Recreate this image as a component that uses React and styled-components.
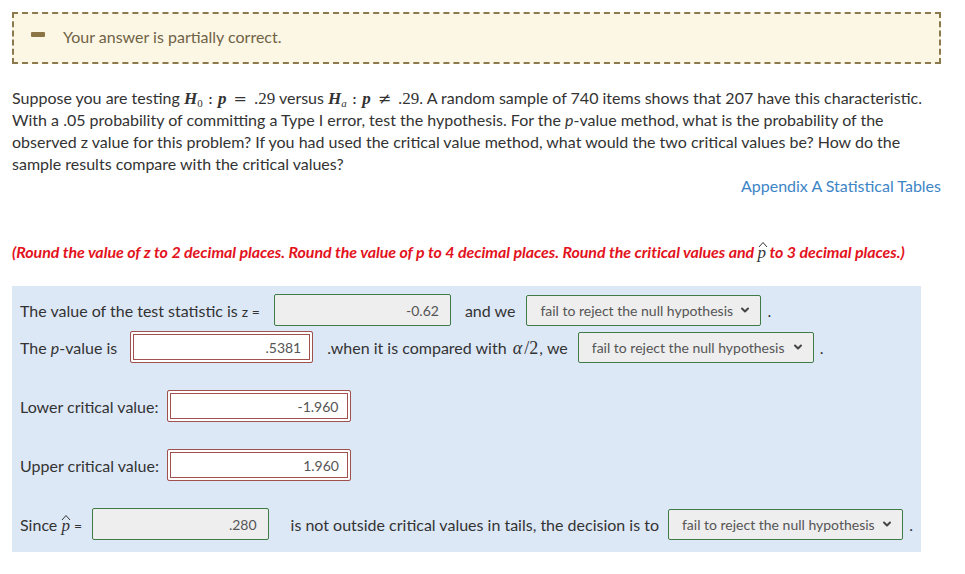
import React from 'react';
import styled, { createGlobalStyle } from 'styled-components';

const GlobalStyle = createGlobalStyle`
  body {
    margin: 0;
    background: #ffffff;
    font-family: Lato, "Open Sans", "Liberation Sans", sans-serif;
    color: #333333;
  }
`;

const Page = styled.div`
  width: 929px;
  padding: 12px 0 0 12px;
`;

const Feedback = styled.div`
  height: 52px;
  box-sizing: border-box;
  border: 2px dashed #8c7a4e;
  background: #fcf6e4;
  display: flex;
  align-items: center;
  padding: 0 0 4px 17px;
  gap: 18px;
  font-size: 16px;
  color: #6f6346;
`;

const Minus = styled.span`
  width: 14px;
  height: 5px;
  border-radius: 1px;
  background: #8c7444;
  margin-top: -4px;
`;

const Question = styled.p`
  margin: 23px 0 0;
  font-size: 16px;
  line-height: 22px;
  color: #333333;
  width: 925px;
`;

const Math = styled.span`
  font-family: "Liberation Serif", "DejaVu Serif", serif;
  font-size: 17px;
  line-height: 1;
  font-style: ${(p) => (p.$italic ? 'italic' : 'normal')};
  font-weight: ${(p) => (p.$bold ? 'bold' : 'normal')};
`;

const Rel = styled.span`
  font-family: "DejaVu Serif", "Liberation Serif", serif;
  font-size: 16px;
  line-height: 1;
  margin: 0 ${(p) => p.$pad || 6}px;
`;

const Sub = styled.sub`
  font-family: "Liberation Serif", "DejaVu Serif", serif;
  font-size: 11px;
  line-height: 0;
  vertical-align: -3px;
  font-style: ${(p) => (p.$italic ? 'italic' : 'normal')};
`;

const Fraction = styled.span`
  font-family: "Liberation Serif", "DejaVu Serif", serif;
  font-size: 18px;
  line-height: 1;
  margin: 0 1px 0 2px;
  i {
    margin-right: 2px;
  }
`;

const LinkRow = styled.div`
  text-align: right;
  font-size: 16px;
  line-height: 22px;
  color: #3d85c6;
`;

const Instruction = styled.p`
  margin: 44px 0 0;
  font-size: 16px;
  line-height: 22px;
  font-style: italic;
  font-weight: bold;
  letter-spacing: -0.06px;
  color: #e3131d;
`;

const Panel = styled.div`
  margin-top: 23px;
  width: 909px;
  box-sizing: border-box;
  background: #dde8f7;
  padding: 8px 8px 12px;
`;

const Row = styled.div`
  display: flex;
  align-items: center;
  margin-top: ${(p) => p.$top || 0}px;
  font-size: 16px;
  color: #333333;
  white-space: nowrap;
`;

const Label = styled.span`
  margin-left: ${(p) => p.$before || 0}px;
  margin-right: ${(p) => p.$space || 14}px;
`;

const Small = styled.span`
  font-size: 14px;
`;

const Field = styled.div`
  box-sizing: border-box;
  width: ${(p) => p.$w}px;
  height: 32px;
  display: flex;
  align-items: center;
  justify-content: flex-end;
  padding-right: 11px;
  font-size: 14px;
  color: #555555;
  border-radius: 2px;
  ${(p) =>
    p.$wrong
      ? `
    background: #ffffff;
    border: 1px solid #a0504d;
    box-shadow: inset 0 0 0 2px #ffffff, inset 0 0 0 3px #a0504d;
  `
      : `
    background: #eeeeee;
    border: 1px solid #3f7b46;
  `}
`;

const Select = styled.div`
  box-sizing: border-box;
  width: ${(p) => p.$w}px;
  height: 31px;
  display: flex;
  align-items: center;
  justify-content: space-between;
  padding: 0 10px 0 13px;
  background: #eeeeee;
  border: 1px solid #3f7b46;
  border-radius: 2px;
  font-size: 14px;
  color: #555555;
`;

const Dot = styled.span`
  margin-left: 6px;
`;

const Hat = styled.span`
  position: relative;
  display: inline-block;
  line-height: 1;
  color: #333333;
  font-weight: normal;
  svg {
    position: absolute;
    left: 0;
    top: -3px;
  }
`;

const Chevron = () => (
  <svg width="10" height="10" viewBox="0 0 10 10">
    <path d="M2 3.5 L5 6.5 L8 3.5" fill="none" stroke="#444" strokeWidth="2" strokeLinecap="round" strokeLinejoin="round" />
  </svg>
);

const PHat = () => (
  <Hat>
    <svg width="10" height="7" viewBox="0 0 10 7">
      <path d="M1 6 L5 1.5 L9 6" fill="none" stroke="#333" strokeWidth="1" />
    </svg>
    <Math $italic>p</Math>
  </Hat>
);

const decision = 'fail to reject the null hypothesis';

export default function App() {
  return (
    <>
      <GlobalStyle />
      <Page>
        <Feedback>
          <Minus />
          <span>Your answer is partially correct.</span>
        </Feedback>

        <Question>
          Suppose you are testing{' '}
          <Math $italic $bold>H</Math>
          <Sub>0</Sub>
          <Rel $pad={5}>:</Rel>
          <Math $italic $bold>p</Math>
          <Rel $pad={7}>=</Rel>
          <Math>.29</Math> versus{' '}
          <Math $italic $bold>H</Math>
          <Sub $italic>a</Sub>
          <Rel $pad={5}>:</Rel>
          <Math $italic $bold>p</Math>
          <Rel $pad={7}>≠</Rel>
          <Math>.29</Math>. A random sample of 740 items shows that 207 have this characteristic. With a .05
          probability of committing a Type I error, test the hypothesis. For the <i>p</i>-value method, what is the
          probability of the observed z value for this problem? If you had used the critical value method, what would
          the two critical values be? How do the sample results compare with the critical values?
        </Question>
        <LinkRow>Appendix A Statistical Tables</LinkRow>

        <Instruction>
          (Round the value of z to 2 decimal places. Round the value of p to 4 decimal places. Round the critical
          values and <PHat /> to 3 decimal places.)
        </Instruction>

        <Panel>
          <Row>
            <Label>
              The value of the test statistic is <Small>z =</Small>
            </Label>
            <Field $w={177}>-0.62</Field>
            <Label $before={14} $space={11}>and we</Label>
            <Select $w={235}>
              {decision}
              <Chevron />
            </Select>
            <Dot>.</Dot>
          </Row>
          <Row $top={5}>
            <Label $space={13}>
              The <i>p</i>-value is
            </Label>
            <Field $w={183} $wrong>.5381</Field>
            <Label $before={14} $space={10}>
              .when it is compared with{' '}
              <Fraction>
                <i>α</i>/2
              </Fraction>
              , we
            </Label>
            <Select $w={236}>
              {decision}
              <Chevron />
            </Select>
            <Dot>.</Dot>
          </Row>
          <Row $top={27}>
            <Label $space={8}>Lower critical value:</Label>
            <Field $w={184} $wrong>-1.960</Field>
          </Row>
          <Row $top={27}>
            <Label $space={8}>Upper critical value:</Label>
            <Field $w={184} $wrong>1.960</Field>
          </Row>
          <Row $top={27}>
            <Label $space={10}>
              Since <PHat /> <Small>=</Small>
            </Label>
            <Field $w={177}>.280</Field>
            <Label $before={22} $space={9}>
              is not outside critical values in tails, the decision is to
            </Label>
            <Select $w={236}>
              {decision}
              <Chevron />
            </Select>
            <Dot>.</Dot>
          </Row>
        </Panel>
      </Page>
    </>
  );
}
